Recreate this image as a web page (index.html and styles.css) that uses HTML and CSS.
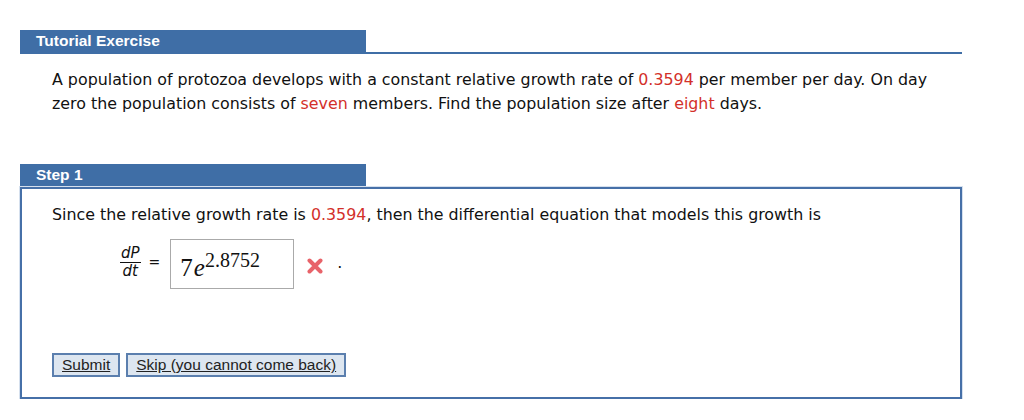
FILE: index.html
```html
<!doctype html>
<html>
<head>
<meta charset="utf-8">
<title>Tutorial Exercise</title>
<link rel="stylesheet" href="styles.css">
</head>
<body>
<div id="exercise">
  <div class="section-head">
    <div class="tab">Tutorial Exercise</div>
  </div>
  <p class="question">A population of protozoa develops with a constant relative growth rate of <span class="given">0.3594</span> per member per day. On day zero the population consists of <span class="given">seven</span> members. Find the population size after <span class="given">eight</span> days.</p>

  <div class="step">
    <div class="tab step-tab">Step 1</div>
    <div class="step-body">
      <p class="question">Since the relative growth rate is <span class="given">0.3594</span>, then the differential equation that models this growth is</p>
      <div class="equation">
        <span class="frac"><span class="num">dP</span><span class="den">dt</span></span>
        <span class="eq">=</span>
        <span class="answer"><span class="math">7<i>e</i><sup>2.8752</sup></span></span>
        <svg class="wrong" width="16" height="16" viewBox="0 0 16 16">
          <path d="M2.5 2.5 L13.5 13.5 M13.5 2.5 L2.5 13.5" stroke="#e8636a" stroke-width="4" stroke-linecap="round"/>
        </svg>
        <span class="dot">.</span>
      </div>
      <div class="buttons">
        <button>Submit</button>
        <button>Skip (you cannot come back)</button>
      </div>
    </div>
  </div>
</div>
</body>
</html>
```

FILE: styles.css
```css
body {
    margin: 0;
    background: #fff;
    color: #111;
    font-family: "DejaVu Sans", Verdana, sans-serif;
}
#exercise {
    width: 942px;
    margin-left: 20px;
    padding-top: 30px;
}
.section-head {
    border-bottom: 2px solid #3f6ea6;
}
.tab {
    width: 330px;
    height: 22px;
    padding-left: 16px;
    background: #3f6ea6;
    color: #fff;
    font: bold 15.5px/22px "Liberation Sans", Arial, sans-serif;
}
.step-tab {
    height: 23px;
}
.question {
    margin: 0;
    padding: 14px 0 0 32px;
    width: 882px;
    font-size: 15.85px;
    line-height: 24px;
}
.given {
    color: #d3302a;
}
.step {
    margin-top: 48px;
}
.step-body {
    border: 2px solid #4670a8;
    box-shadow: 0 0 0 1px #d5e0ee;
    height: 208px;
    padding-top: 0;
}
.step-body .question {
    padding-left: 30px;
}
.equation {
    display: flex;
    align-items: center;
    margin: 12px 0 0 98px;
}
.frac {
    display: flex;
    flex-direction: column;
    align-items: center;
    font-style: italic;
    font-size: 15px;
    line-height: 17px;
    margin-top: -3px;
}
.num {
    border-bottom: 1px solid #111;
    padding: 0 1px;
}
.eq {
    font-size: 14px;
    margin: -4px 10px 0 8px;
}
.answer {
    width: 113px;
    height: 48px;
    border: 1px solid #aaa;
    padding-left: 9px;
    display: flex;
    align-items: center;
}
.math {
    font-family: "Liberation Serif", "Times New Roman", serif;
    font-size: 25px;
    margin-top: 2px;
}
.math i {
    padding-left: 1px;
}
.math sup {
    font-size: 20px;
    vertical-align: 9px;
}
.wrong {
    margin: 3px 0 0 13px;
}
.dot {
    margin: 0 0 4px 14px;
}
.buttons {
    display: flex;
    gap: 6px;
    margin: 64px 0 0 30px;
}
button {
    height: 24px;
    padding: 0 8px;
    background: #dde6f0;
    border: 2px solid #5b7fae;
    color: #222;
    font: 15.5px "Liberation Sans", Arial, sans-serif;
    text-decoration: underline;
}
```
